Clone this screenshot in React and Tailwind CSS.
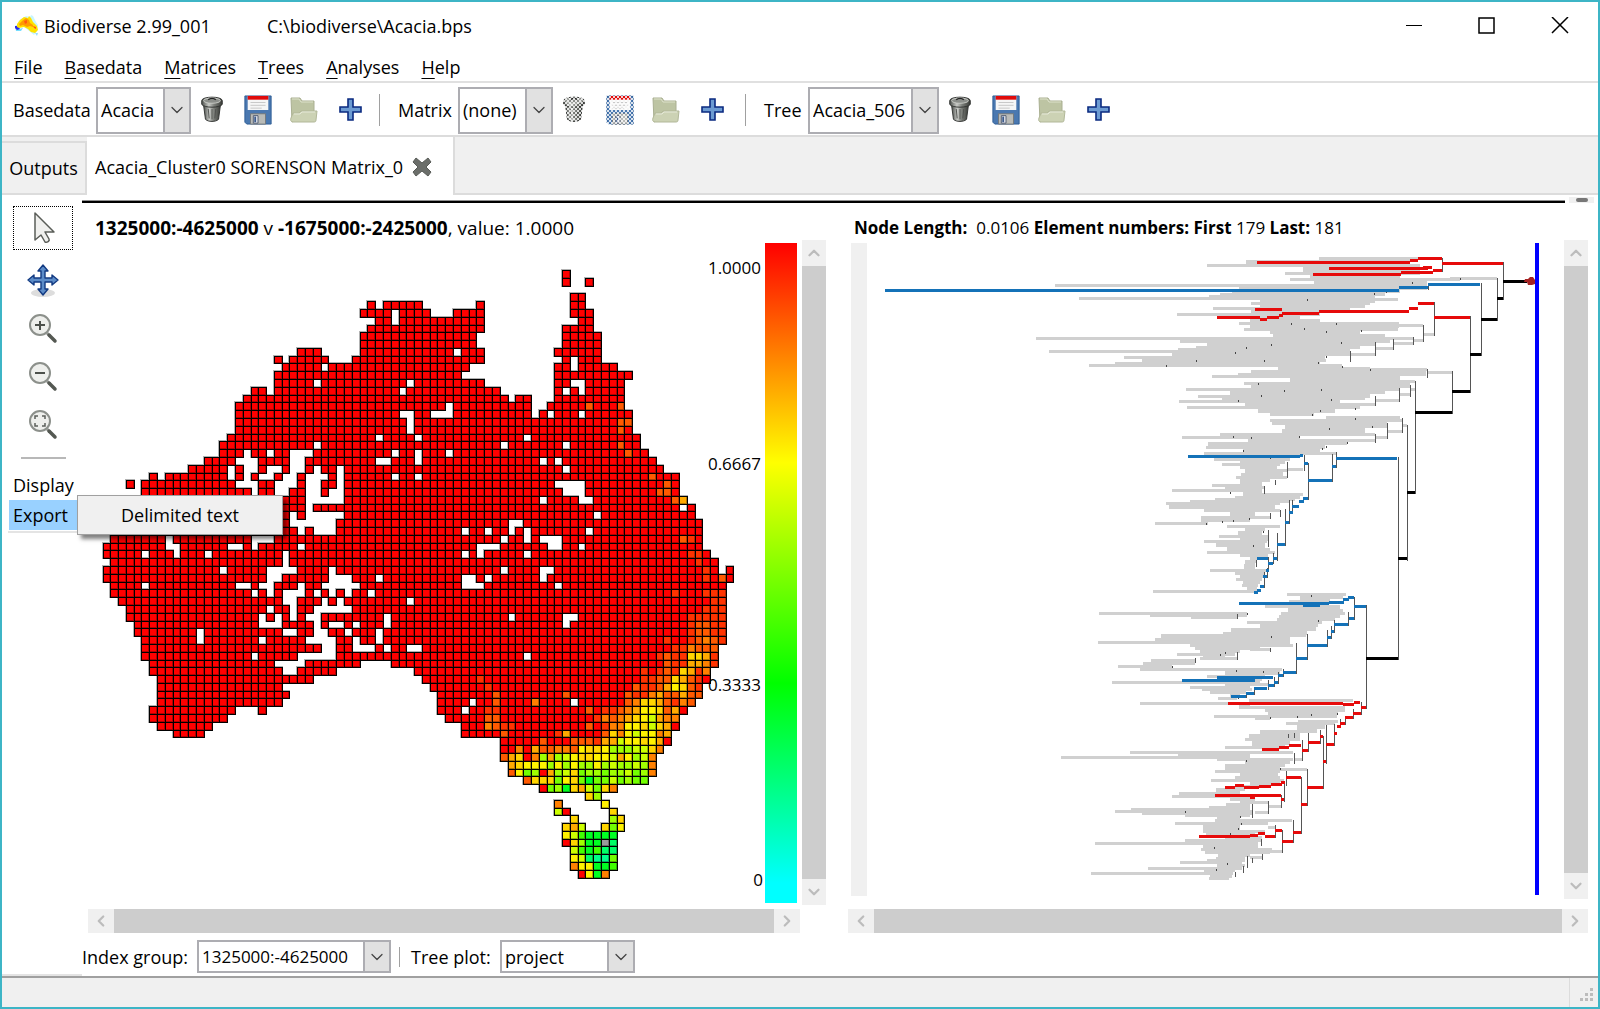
import { ChevronDown, ChevronLeft, ChevronRight, ChevronUp } from 'lucide-react';

// one entry per grid row, "start-end" column spans
const MAP_ROWS = [
  '59-60',
  '59-60 62-63',
  '',
  '60-62',
  '34-35 36-41 48-49 60-62',
  '33-37 38-42 45-49 60-63',
  '35-37 38-49 61-63',
  '34-49 59-63',
  '33-48 59-64',
  '33-48 59-64',
  '25-28 33-45 46-49 58-64',
  '22-23 24-29 32-49 59-60 61-64',
  '23-28 29-47 58-60 61-66',
  '22-46 58-68',
  '22-27 28-39 40-49 58-60 62-67',
  '19-21 22-38 39-51 58-59 60-61 62-67',
  '18-52 53-55 58-67',
  '17-44 45-55 57-67',
  '17-38 40-42 45-55 56-57 58-61 62-68',
  '17-39 40-68',
  '17-39 40-68',
  '16-35 36-40 41-54 55-69',
  '15-27 28-51 52-59 60-69',
  '15-18 19-21 22-24 27-37 38-40 41-44 45-70',
  '13-17 20-24 26-35 37-40 41-56 57-58 59-71',
  '11-16 17-18 20-21 23-24 26-27 28-30 31-59 60-72',
  '6-7 8-16 17-18 19-20 22-23 25-26 29-30 31-37 38-40 41-74',
  '3-4 5-17 20-22 25-26 28-30 31-58 62-74',
  '5-19 20-22 24-26 28-29 31-59 62-74',
  '4-26 31-56 57-61 63-75',
  '4-26 27-74 75-76',
  '3-24 25-26 31-63 64-76',
  '3-24 30-52 54-77',
  '2-25 26-27 30-46 47-49 50-52 53-54 55-62 63-77',
  '1-8 9-19 22-51 52-54 55-56 59-77',
  '0-8 10-16 18-19 20-25 26-48 51-57 59-61 62-77',
  '0-5 6-9 10-13 14-23 24-46 47-48 49-54 55-78',
  '1-23 24-79',
  '0-15 16-21 25-29 30-51 52-56 58-79 80-81',
  '0-21 23-29 32-35 36-46 48-49 50-56 57-81',
  '1-5 6-17 19-20 22-25 26-28 33-46 49-58 59-80',
  '1-19 20-21 22-23 26-27 28-29 30-31 32-34 35-80',
  '2-23 25-28 29-30 31-39 40-80',
  '3-21 22-24 25-27 32-80',
  '3-20 21-22 23-24 25-26 28-36 37-52 53-59 61-80',
  '4-20 23-27 28-29 31-32 33-36 37-59 60-80',
  '4-12 13-23 25-27 29-31 32-35 36-80',
  '5-12 13-20 21-26 30-32 33-35 36-80',
  '5-28 30-32 35-36 37-39 41-79',
  '5-19 20-25 30-54 55-79',
  '6-22 26-33 37-79',
  '6-23 25-30 40-78',
  '7-27 41-78',
  '7-23 42-77',
  '7-24 43-77',
  '7-23 43-47 48-60 61-76',
  '6-17 20-21 43-46 47-75',
  '6-16 44-74',
  '7-14 46-74',
  '9-13 46-73',
  '51-73',
  '51-72',
  '51-71',
  '52-71',
  '52-71',
  '54-70',
  '56-66',
  '62-64',
  '58-59 64-65',
  '58-60 65-66',
  '60-61 65-67',
  '59-62 64-67',
  '59-66',
  '59-66',
  '60-66',
  '60-66',
  '60-66',
  '61-65',
];

const MAP_COLORS = {
  a: '#ff0000',
  b: '#ff3300',
  c: '#ff5a00',
  d: '#ff8000',
  e: '#ffaa00',
  f: '#ffd500',
  g: '#fff200',
  h: '#ccff00',
  i: '#a0ff00',
  j: '#73ff00',
  k: '#40ff00',
  l: '#00ff22',
  m: '#00ff66',
  n: '#00ff8c',
  x: '#999999',
};

// row: [first column, colour letters]
const MAP_SHADES = {
  17: [[62, 'c'], [66, 'c']],
  19: [[66, 'cc']],
  20: [[66, 'c']],
  22: [[66, 'c']],
  23: [[67, 'c']],
  26: [[70, 'c']],
  27: [[72, 'c']],
  28: [[71, 'cc']],
  29: [[73, 'ce']],
  34: [[74, 'cb']],
  36: [[75, 'bb']],
  37: [[76, 'b']],
  38: [[77, 'b']],
  39: [[77, 'b'], [79, 'c']],
  41: [[73, 'b'], [77, 'bbb']],
  42: [[78, 'bb']],
  43: [[77, 'bbb']],
  44: [[75, 'bbbbb']],
  45: [[75, 'bccbb']],
  46: [[75, 'bccbb']],
  47: [[72, 'b'], [75, 'bcdcb']],
  48: [[73, 'bbdccc']],
  49: [[71, 'bcbbffeb']],
  50: [[72, 'cbbeedb']],
  51: [[69, 'babcbfebd']],
  52: [[48, 'b'], [69, 'bbccfecba']],
  53: [[49, 'b'], [68, 'cbbcegfcb']],
  54: [[50, 'c'], [59, 'c'], [67, 'cbbdeccecc']],
  55: [[50, 'c'], [55, 'd'], [67, 'cdffecbdc']],
  56: [[49, 'bb'], [62, 'cabbcdeggfcea']],
  57: [[49, 'cc'], [63, 'bdcdefghedd']],
  58: [[49, 'dcbb'], [62, 'c'], [64, 'bddggfhfea']],
  59: [[51, 'c'], [58, 'be'], [64, 'cfdghggde']],
  60: [[56, 'c'], [60, 'cccbeehggfgea']],
  61: [[51, 'aadaeccddcgffgiiihhfd']],
  62: [[51, 'cefadieihgffgghegihd']],
  63: [[52, 'efgggigigiigihiihid']],
  64: [[52, 'cgjiaeihfjiijiihjid']],
  65: [[54, 'cfffjgfjljjhjijj']],
  66: [[56, 'ajilfehjfd']],
  67: [[62, 'fi']],
  68: [[58, 'd'], [64, 'g']],
  69: [[58, 'ha'], [65, 'f']],
  70: [[60, 'f'], [65, 'if']],
  71: [[59, 'feh'], [64, 'fjg']],
  72: [[59, 'ghkllll']],
  73: [[59, 'afillxm']],
  74: [[60, 'hklkmm']],
  75: [[60, 'ghmnnj']],
  76: [[60, 'dggllk']],
  77: [[61, 'agld']],
};

const CELL = 7.79;

function buildMap() {
  const paths = {};
  MAP_ROWS.forEach((row, r) => {
    if (!row) return;
    const shades = {};
    (MAP_SHADES[r] || []).forEach(([start, letters]) => {
      letters.split('').forEach((l, i) => {
        shades[start + i] = l;
      });
    });
    const y = Math.round(30 + r * CELL);
    const h = Math.round(30 + (r + 1) * CELL) - y;
    row.split(' ').forEach((span) => {
      const [from, to] = span.split('-').map(Number);
      for (let c = from; c < to; c++) {
        const x = Math.round(14.5 + c * CELL);
        const w = Math.round(14.5 + (c + 1) * CELL) - x;
        const key = shades[c] || 'a';
        paths[key] = (paths[key] || '') + `M${x} ${y}h${w}v${h}h-${w}z`;
      }
    });
  });
  return paths;
}

const MAP_PATHS = buildMap();
const MAP_OUTLINE = Object.values(MAP_PATHS).join('');

// terminal branches of the dendrogram: y, x1, x2
const LEAVES = [
  [258, 1319, 1418], [261, 1246, 1410], [265, 1207, 1420], [268, 1303, 1423], [270, 1303, 1420],
  [273, 1285, 1420], [276, 1310, 1400], [279, 1290, 1460], [282, 1314, 1427], [285, 1055, 1427],
  [288, 1239, 1427], [291, 1232, 1400], [294, 1220, 1385], [296, 1209, 1375], [298, 1079, 1375],
  [301, 1260, 1375], [303, 1251, 1370], [306, 1260, 1365], [308, 1213, 1350], [311, 1251, 1350],
  [314, 1177, 1320], [317, 1239, 1300], [320, 1250, 1320], [323, 1239, 1399], [326, 1250, 1399],
  [329, 1244, 1398], [332, 1270, 1360], [335, 1273, 1385], [338, 1036, 1413], [341, 1180, 1390],
  [344, 1207, 1375], [347, 1196, 1360], [349, 1178, 1350], [351, 1049, 1350], [354, 1172, 1350],
  [357, 1124, 1325], [360, 1142, 1326], [363, 1115, 1320], [365, 1089, 1342], [368, 1278, 1370],
  [371, 1251, 1426], [374, 1238, 1426], [376, 1212, 1400], [379, 1290, 1400], [383, 1244, 1410],
  [386, 1251, 1410], [389, 1186, 1400], [392, 1230, 1385], [396, 1198, 1370], [398, 1222, 1365],
  [401, 1179, 1340], [404, 1245, 1375], [407, 1187, 1360], [411, 1258, 1335], [414, 1270, 1314],
  [417, 1326, 1400], [420, 1270, 1402], [423, 1272, 1387], [426, 1285, 1387], [430, 1282, 1365],
  [434, 1220, 1375], [437, 1182, 1300], [440, 1248, 1375], [443, 1208, 1347], [447, 1206, 1325],
  [450, 1243, 1320], [453, 1204, 1336], [456, 1214, 1300], [459, 1214, 1290], [462, 1240, 1285],
  [464, 1222, 1280], [467, 1240, 1277], [470, 1245, 1287], [474, 1241, 1283], [477, 1236, 1287],
  [480, 1240, 1270], [485, 1212, 1262], [487, 1225, 1265], [490, 1172, 1262], [494, 1243, 1303],
  [497, 1235, 1300], [499, 1215, 1295], [501, 1190, 1290], [503, 1166, 1280], [507, 1169, 1275],
  [510, 1204, 1280], [513, 1230, 1255], [517, 1201, 1270], [520, 1201, 1250], [523, 1155, 1208],
  [526, 1227, 1280], [529, 1245, 1265], [532, 1238, 1262], [536, 1219, 1268], [539, 1240, 1268],
  [541, 1204, 1267], [545, 1216, 1265], [549, 1227, 1270], [552, 1207, 1275], [555, 1240, 1268],
  [558, 1250, 1265], [561, 1245, 1256], [565, 1244, 1255], [570, 1210, 1266], [573, 1235, 1264],
  [576, 1240, 1263], [579, 1236, 1262], [582, 1243, 1260], [585, 1242, 1258], [588, 1247, 1257],
  [591, 1153, 1257], [594, 1287, 1346], [597, 1300, 1343], [601, 1289, 1330], [603, 1270, 1320],
  [606, 1265, 1340], [610, 1288, 1343], [613, 1281, 1345], [616, 1279, 1340], [619, 1277, 1335],
  [622, 1247, 1322], [625, 1260, 1318], [629, 1231, 1316], [633, 1223, 1307], [635, 1161, 1306],
  [639, 1155, 1290], [642, 1098, 1290], [645, 1190, 1293], [648, 1195, 1260], [651, 1200, 1240],
  [654, 1177, 1235], [657, 1203, 1225], [660, 1151, 1195], [663, 1143, 1195], [666, 1118, 1172],
  [669, 1140, 1282], [673, 1225, 1280], [676, 1207, 1265], [679, 1217, 1262], [682, 1112, 1260],
  [684, 1225, 1268], [687, 1190, 1250], [689, 1202, 1252], [692, 1210, 1246], [694, 1230, 1240],
  [698, 1218, 1237], [700, 1249, 1353], [703, 1140, 1250], [707, 1239, 1345], [710, 1265, 1345],
  [713, 1268, 1338], [716, 1214, 1337], [718, 1255, 1270], [721, 1298, 1338], [723, 1286, 1335],
  [727, 1297, 1325], [731, 1260, 1317], [735, 1249, 1300], [739, 1245, 1300], [743, 1252, 1290],
  [747, 1225, 1285], [749, 1270, 1275], [752, 1130, 1293], [755, 1178, 1250], [757, 1061, 1250],
  [759, 1217, 1293], [762, 1245, 1290], [765, 1225, 1285], [768, 1225, 1280], [771, 1215, 1280],
  [774, 1240, 1278], [777, 1235, 1280], [780, 1211, 1284], [783, 1250, 1280], [786, 1235, 1265],
  [789, 1216, 1245], [793, 1179, 1240], [796, 1172, 1250], [799, 1230, 1255], [802, 1240, 1262],
  [804, 1226, 1250], [807, 1209, 1250], [809, 1131, 1250], [811, 1115, 1252], [813, 1142, 1252],
  [815, 1185, 1250], [817, 1217, 1240], [820, 1215, 1292], [823, 1175, 1268], [828, 1203, 1240],
  [831, 1203, 1265], [834, 1206, 1255], [837, 1225, 1262], [840, 1185, 1262], [843, 1095, 1258],
  [847, 1203, 1258], [849, 1201, 1272], [852, 1205, 1270], [855, 1218, 1250], [858, 1216, 1245],
  [860, 1207, 1245], [862, 1180, 1242], [865, 1217, 1245], [868, 1148, 1242], [870, 1204, 1235],
  [873, 1091, 1233], [876, 1210, 1232], [878, 1209, 1229],
];

const LEAF_EXTRA = [
  [278, 1450, 1497], [299, 1340, 1398], [325, 1399, 1423], [334, 1423, 1434], [340, 1413, 1423],
  [343, 1393, 1413], [348, 1375, 1393], [354, 1350, 1375], [369, 1360, 1427], [372, 1427, 1452],
  [381, 1400, 1415], [389, 1410, 1415], [394, 1399, 1410], [400, 1375, 1399], [425, 1402, 1407],
  [431, 1387, 1402], [437, 1375, 1387], [469, 1288, 1303], [613, 1099, 1247], [615, 1150, 1247],
  [617, 1191, 1237], [649, 1250, 1270], [658, 1200, 1237], [759, 1294, 1302], [769, 1280, 1307],
  [802, 1260, 1268], [806, 1268, 1281], [812, 1255, 1268], [827, 1268, 1275], [851, 1268, 1282],
  [857, 1250, 1262],
];

const RED = [
  [258, 1418, 1442], [260, 1410, 1418], [262, 1257, 1410], [263, 1442, 1503], [267, 1423, 1432],
  [268, 1329, 1428], [270, 1433, 1442], [272, 1401, 1433], [274, 1313, 1401], [303, 1418, 1434],
  [308, 1409, 1418], [311, 1319, 1409], [313, 1282, 1319], [309, 1255, 1282], [315, 1279, 1283],
  [317, 1267, 1279], [319, 1260, 1267], [317, 1217, 1260], [317, 1434, 1470], [703, 1228, 1343],
  [704, 1343, 1354], [702, 1354, 1360], [707, 1361, 1366], [713, 1353, 1361], [717, 1345, 1353],
  [723, 1340, 1345], [726, 1337, 1341], [733, 1334, 1337], [744, 1326, 1334], [761, 1323, 1326],
  [736, 1320, 1323], [787, 1307, 1323], [742, 1308, 1320], [750, 1302, 1308], [745, 1289, 1301],
  [747, 1279, 1289], [749, 1262, 1279], [804, 1301, 1307], [777, 1286, 1301], [832, 1293, 1301],
  [841, 1282, 1293], [830, 1275, 1282], [836, 1265, 1275], [833, 1258, 1265], [835, 1250, 1258],
  [836, 1199, 1250], [782, 1281, 1285], [784, 1271, 1282], [786, 1259, 1271], [787, 1244, 1259],
  [785, 1235, 1244], [787, 1225, 1235], [799, 1281, 1284], [795, 1215, 1281], [797, 1250, 1255],
];

const BLUE = [
  [290, 885, 1399], [287, 1399, 1428], [284, 1428, 1480], [456, 1188, 1300], [455, 1300, 1303],
  [463, 1304, 1308], [480, 1308, 1332], [466, 1332, 1336], [458, 1336, 1397], [498, 1303, 1308],
  [501, 1299, 1304], [506, 1292, 1299], [512, 1289, 1293], [522, 1285, 1289], [544, 1277, 1285],
  [558, 1273, 1277], [563, 1268, 1273], [558, 1257, 1268], [570, 1266, 1269], [576, 1263, 1267],
  [586, 1260, 1264], [590, 1257, 1261], [592, 1254, 1258], [597, 1348, 1354], [599, 1343, 1349],
  [602, 1329, 1344], [603, 1239, 1329], [605, 1303, 1320], [606, 1354, 1366], [618, 1349, 1354],
  [624, 1334, 1348], [631, 1331, 1334], [637, 1327, 1331], [645, 1307, 1327], [658, 1296, 1307],
  [672, 1283, 1296], [675, 1278, 1283], [682, 1274, 1278], [685, 1268, 1274], [688, 1254, 1267],
  [693, 1246, 1254], [696, 1231, 1246], [677, 1262, 1273], [677, 1217, 1262], [680, 1182, 1255],
];

const BLACK = [
  [281, 1503, 1527], [298, 1497, 1503], [319, 1481, 1497], [354, 1470, 1481], [391, 1452, 1470],
  [412, 1415, 1452], [492, 1407, 1415], [558, 1398, 1407], [658, 1366, 1398],
];

// x, y1, y2
const STEMS = [
  [1442, 258, 271], [1503, 262, 299], [1497, 278, 320], [1481, 283, 355], [1428, 283, 289],
  [1470, 316, 392], [1434, 302, 335], [1452, 371, 413], [1427, 369, 377], [1415, 381, 493],
  [1407, 425, 560], [1398, 457, 659], [1366, 605, 708], [1423, 325, 341], [1413, 337, 344],
  [1393, 339, 349], [1375, 342, 355], [1350, 351, 361], [1399, 388, 401], [1410, 385, 396],
  [1375, 396, 405], [1402, 418, 432], [1387, 423, 438], [1375, 434, 442], [1304, 455, 470],
  [1308, 463, 499], [1332, 454, 481], [1336, 452, 467], [1287, 462, 477], [1275, 480, 484],
  [1264, 486, 493], [1289, 500, 523], [1292, 500, 513], [1285, 509, 545], [1280, 510, 516],
  [1270, 513, 518], [1277, 533, 560], [1273, 553, 563], [1268, 530, 546], [1268, 557, 571],
  [1267, 568, 577], [1264, 572, 587], [1256, 560, 566], [1354, 597, 619], [1348, 612, 625],
  [1334, 620, 632], [1331, 626, 638], [1327, 630, 646], [1307, 634, 659], [1296, 643, 673],
  [1283, 669, 676], [1278, 672, 683], [1274, 677, 686], [1268, 680, 689], [1254, 687, 694],
  [1246, 692, 697], [1237, 614, 618], [1270, 648, 651], [1237, 652, 659], [1195, 658, 662],
  [1361, 702, 714], [1353, 709, 718], [1345, 717, 724], [1340, 719, 727], [1334, 724, 745],
  [1326, 725, 763], [1323, 736, 788], [1320, 730, 743], [1308, 733, 751], [1302, 740, 760],
  [1294, 753, 763], [1307, 769, 805], [1301, 777, 833], [1286, 771, 785], [1284, 782, 801],
  [1281, 795, 807], [1268, 801, 813], [1252, 804, 817], [1293, 820, 842], [1282, 830, 852],
  [1275, 825, 837], [1262, 854, 859], [1252, 858, 862], [1247, 856, 867], [1243, 866, 872],
  [1235, 872, 876], [1261, 839, 845], [1288, 734, 737], [1294, 733, 737],
];

const TICKS = [
  [1460, 279], [1412, 283], [1374, 294], [1307, 300], [1386, 292], [1291, 324], [1336, 324], [1304, 329],
  [1361, 331], [1326, 332], [1341, 343], [1271, 345], [1246, 348], [1235, 353], [1166, 366], [1196, 361],
  [1264, 361], [1318, 363], [1326, 357], [1342, 367], [1370, 370], [1258, 384], [1284, 391], [1321, 390],
  [1261, 396], [1238, 401], [1331, 400], [1355, 409], [1312, 415], [1320, 411], [1355, 419], [1372, 427],
  [1329, 429], [1299, 437], [1251, 438], [1233, 437], [1347, 443], [1326, 447], [1322, 449], [1243, 451],
  [1270, 458], [1230, 493], [1222, 522], [1233, 521], [1249, 519], [1206, 524], [1263, 532], [1253, 546],
  [1311, 596], [1247, 614], [1318, 621], [1271, 637], [1225, 653], [1220, 655], [1172, 667], [1236, 671],
  [1263, 672], [1238, 698], [1270, 718], [1297, 717], [1311, 715], [1337, 714], [1246, 761], [1280, 769],
  [1185, 812], [1240, 817], [1241, 824], [1238, 829], [1230, 834], [1214, 848], [1216, 870], [1227, 864],
];

const hPath = (rows) => rows.map(([y, x1, x2]) => `M${x1} ${y}h${x2 - x1}v3h${x1 - x2}z`).join('');

const leafFill = LEAVES.slice(1)
  .map(([y, x1, x2], i) => {
    const [py, px1, px2] = LEAVES[i];
    const left = Math.max(x1, px1);
    const right = Math.min(x2, px2);
    return right > left && y - py < 6 ? `M${left} ${py}H${right}V${y + 3}H${left}z` : '';
  })
  .join('');

function MapCanvas() {
  return (
    <svg className="h-full w-full" role="img" aria-label="Map of groups">
      <defs>
        <linearGradient id="legend" x1="0" y1="0" x2="0" y2="1">
          <stop offset="0" stopColor="#ff0000" />
          <stop offset="0.333" stopColor="#ffff00" />
          <stop offset="0.667" stopColor="#00ff00" />
          <stop offset="0.97" stopColor="#00ffff" />
          <stop offset="1" stopColor="#00ffff" />
        </linearGradient>
      </defs>
      <g shapeRendering="crispEdges">
        {Object.entries(MAP_PATHS).map(([key, d]) => (
          <path key={key} d={d} fill={MAP_COLORS[key]} />
        ))}
        <path d={MAP_OUTLINE} fill="none" stroke="#000" strokeWidth="2" strokeOpacity="0.3" />
        <path d={MAP_OUTLINE} fill="none" stroke="#000" strokeWidth="1" />
      </g>
      <rect x="677" y="3" width="32" height="660" fill="url(#legend)" />
      <g textAnchor="end" fill="#000" className="text-[17px]">
        <text x="673" y="34">1.0000</text>
        <text x="673" y="230">0.6667</text>
        <text x="673" y="451">0.3333</text>
        <text x="675" y="646">0</text>
      </g>
    </svg>
  );
}

function TreeCanvas() {
  return (
    <svg className="h-full w-full" role="img" aria-label="Cluster dendrogram">
      <rect x="3" y="3" width="16" height="653" fill="#f0f0f0" />
      <g transform="translate(-848 -241)" shapeRendering="crispEdges">
        <path d={leafFill + hPath(LEAVES) + hPath(LEAF_EXTRA)} fill="#d0d0d0" />
        <path
          d={STEMS.map(([x, y1, y2]) => `M${x} ${y1}V${y2 + 1}`).join('')}
          stroke="#555"
          strokeWidth="1"
          transform="translate(0.5 1)"
        />
        <path d={TICKS.map(([x, y]) => `M${x} ${y}h1v2h-1z`).join('')} fill="#444" />
        <path d={hPath(BLACK)} fill="#000" />
        <path d={hPath(BLUE)} fill="#1472b8" />
        <path d={hPath(RED)} fill="#e60b0b" />
        <path d="M1535 244h4v652h-4z" fill="#0000ff" />
      </g>
      <path d="M677 39h3l2-2h3l2 3v4l-3 1h-4l-1-3h-3z" fill="#a52222" />
    </svg>
  );
}

function LogoIcon() {
  return (
    <svg width="24" height="22" viewBox="0 0 24 22" aria-hidden="true">
      <path d="M3 7l3-3 5-3 4 1 1-2 2 1 3 6 2 3-1 6-3 4z" fill="#c8f6ff" />
      <path d="M0 11l3-1 1 4 4-1-2 3H1z" fill="#7df" />
      <path d="M0 11h3l2 3-3 1-2-2z" fill="#2a2ae8" />
      <path d="M2 9l3-4 4-3 4 1 1-2 2 2 2 4 4 4 1 4-3 3-4-1-3-3-4-2-5 1-2-1z" fill="#ffe100" />
      <path d="M7 6l4-3 3 2 1 3 3 2v2l-3-1-3 1-4-2-3 1-1-2z" fill="#ff9a00" />
      <path d="M9 6l3-1v3l-2 1zM18 11l3 1v2l-2-1z" fill="#ff5a10" />
      <path d="M20 18h3l-1 3z" fill="#9df" />
    </svg>
  );
}

function TrashIcon() {
  return (
    <svg width="24" height="28" viewBox="0 0 24 30" aria-hidden="true">
      <defs>
        <linearGradient id="can">
          <stop offset="0" stopColor="#4a4d4a" />
          <stop offset="0.35" stopColor="#c8cac6" />
          <stop offset="0.6" stopColor="#7c7f7a" />
          <stop offset="1" stopColor="#3a3c38" />
        </linearGradient>
      </defs>
      <path d="M3 10h18l-2 15c-3 3-11 3-14 0z" fill="url(#can)" stroke="#2e302e" />
      <path d="M8 14l1 10M12 14v11M16 14l-1 10" stroke="#50524f" />
      <path d="M1 5c0-5 22-5 22 0v4c-3 4-19 4-22 0z" fill="url(#can)" stroke="#2e302e" />
      <ellipse cx="12" cy="5" rx="9" ry="2.8" fill="#8b8e8a" stroke="#c9cbc6" />
      <path d="M8 4c2-2 6-2 8 0" stroke="#222" fill="none" strokeWidth="1.4" />
    </svg>
  );
}

function SaveIcon() {
  return (
    <svg width="30" height="30" viewBox="0 0 30 32" aria-hidden="true">
      <path d="M1 1h28v30H3l-2-2z" fill="#4a78b0" stroke="#2d5c94" />
      <path d="M4 1h22v15H4z" fill="#f6f6f6" />
      <path d="M4 1h22v4H4z" fill="#e00b0b" />
      <path d="M7 8h16M7 11h16M7 14h12" stroke="#c5c5c5" />
      <path d="M7 20h16v11H7z" fill="#b9bbb8" stroke="#74777a" />
      <path d="M10 22h5v8h-5z" fill="#e9eaf0" stroke="#4d5a70" />
      <path d="M11 23h2v6h-2z" fill="#3c5b8c" />
    </svg>
  );
}

function FolderIcon() {
  return (
    <svg width="30" height="28" viewBox="0 0 30 28" aria-hidden="true">
      <path d="M2 2h9l2 3h12v12l-22 9z" fill="#bdc4a3" stroke="#aab092" strokeLinejoin="round" />
      <path d="M3 3h7l2 3h12" stroke="#dde1cb" fill="none" />
      <path d="M4 26c-2 0-3-2-2-4l2-5h6l2-2h16l-1 9c0 2-1 2-3 2z" fill="#ccd2b4" stroke="#b2b899" strokeLinejoin="round" />
      <path d="M5 18h6l2-2h13" stroke="#e5e8d8" fill="none" />
    </svg>
  );
}

function PlusIcon() {
  return (
    <svg width="24" height="24" viewBox="0 0 24 24" aria-hidden="true">
      <path d="M10 1h5v8h8v5h-8v8h-5v-8H2V9h8z" fill="#6c9bd2" stroke="#0a2a80" strokeWidth="1.6" />
    </svg>
  );
}

function IconButton({ label, disabled, children }) {
  return (
    <button
      type="button"
      aria-label={label}
      disabled={disabled}
      className="relative flex h-10 w-[42px] items-center justify-center"
    >
      {children}
      {disabled && (
        <svg className="absolute inset-0 h-full w-full" aria-hidden="true">
          <defs>
            <pattern id="stipple" width="4" height="4" patternUnits="userSpaceOnUse">
              <path d="M0 0h2v2H0zM2 2h2v2H2z" fill="#fff" fillOpacity="0.8" />
            </pattern>
          </defs>
          <rect width="100%" height="100%" fill="url(#stipple)" shapeRendering="crispEdges" />
        </svg>
      )}
    </button>
  );
}

function Combo({ id, value, size }) {
  return (
    <div className={`relative shrink-0 ${size}`}>
      <select
        id={id}
        defaultValue={value}
        className="h-full w-full appearance-none border-2 border-[#adadb2] bg-white pl-[3px] pr-7 outline-none"
      >
        <option>{value}</option>
      </select>
      <span className="pointer-events-none absolute inset-y-0 right-0 flex w-7 items-center justify-center border-2 border-[#adadb2] bg-[#e1e1e1]">
        <ChevronDown className="size-5 text-[#444]" strokeWidth={1.5} />
      </span>
    </div>
  );
}

function ToolGroup({ name, label, value, labelWidth, size, disabled }) {
  return (
    <div className="flex items-center">
      <label htmlFor={name} className={labelWidth}>
        {label}
      </label>
      <Combo id={name} value={value} size={size} />
      <div className="flex gap-1">
        <IconButton label={`Delete ${label}`} disabled={disabled}>
          <TrashIcon />
        </IconButton>
        <IconButton label={`Save ${label}`} disabled={disabled}>
          <SaveIcon />
        </IconButton>
        <IconButton label={`Open ${label}`}>
          <FolderIcon />
        </IconButton>
        <IconButton label={`New ${label}`}>
          <PlusIcon />
        </IconButton>
      </div>
    </div>
  );
}

function ScrollBar({ vertical }) {
  const Back = vertical ? ChevronUp : ChevronLeft;
  const Forward = vertical ? ChevronDown : ChevronRight;
  const button = vertical ? 'h-[26px] w-full' : 'h-full w-[26px]';
  return (
    <div className={vertical ? 'flex w-6 shrink-0 flex-col bg-[#f0f0f0]' : 'flex h-6 bg-[#f0f0f0]'}>
      <button type="button" aria-label="Scroll back" className={`flex shrink-0 items-center justify-center ${button}`}>
        <Back className="size-[18px] text-[#bcbcbc]" strokeWidth={3} />
      </button>
      <div className="flex-1 bg-[#cdcdcd]" />
      <button type="button" aria-label="Scroll forward" className={`flex shrink-0 items-center justify-center ${button}`}>
        <Forward className="size-[18px] text-[#bcbcbc]" strokeWidth={3} />
      </button>
    </div>
  );
}

function Magnifier({ children }) {
  return (
    <svg width="32" height="32" viewBox="0 0 32 32" fill="none" aria-hidden="true">
      <path d="M20 20l3 3" stroke="#a0a29e" strokeWidth="3" />
      <path d="M22 22l6 6" stroke="#545852" strokeWidth="3.5" strokeLinecap="round" />
      <circle cx="13" cy="12" r="10" fill="#eeefec" stroke="#8c908b" strokeWidth="2" />
      {children}
    </svg>
  );
}

function SideTools() {
  return (
    <aside className="flex w-20 shrink-0 flex-col border-b-2 border-[#e4e4e4]">
      <div className="flex flex-col items-center pl-[2px] pt-[11px]">
        <button
          type="button"
          aria-label="Select"
          className="flex h-[44px] w-[60px] items-center justify-center border border-dotted border-black"
        >
          <svg width="24" height="34" viewBox="0 0 24 34" aria-hidden="true">
            <path
              d="M4 2v27l6-5 4 7c2 1 5-1 4-3l-4-7h9z"
              fill="#f0f0ee"
              stroke="#5a5d58"
              strokeWidth="1.5"
              strokeLinejoin="round"
            />
          </svg>
        </button>
        <button type="button" aria-label="Pan" className="mt-[11px] flex h-10 w-12 items-center justify-center">
          <svg width="32" height="34" viewBox="0 0 32 34" aria-hidden="true">
            <ellipse cx="16" cy="29" rx="12" ry="4" fill="#ddd" />
            <path
              d="M16 1l5 6h-3v7h7v-3l6 5-6 5v-3h-7v7h3l-5 6-5-6h3v-7H7v3l-6-5 6-5v3h7V7h-3z"
              fill="#5c8cc8"
              stroke="#123a82"
              strokeWidth="1.4"
              strokeLinejoin="round"
            />
          </svg>
        </button>
        <button type="button" aria-label="Zoom in" className="mt-2 flex h-10 w-12 items-center justify-center">
          <Magnifier>
            <path d="M13 8v9M8 12h10" stroke="#4c504b" strokeWidth="2" />
          </Magnifier>
        </button>
        <button type="button" aria-label="Zoom out" className="mt-2 flex h-10 w-12 items-center justify-center">
          <Magnifier>
            <path d="M8 12h10" stroke="#4c504b" strokeWidth="2" />
          </Magnifier>
        </button>
        <button type="button" aria-label="Zoom to fit" className="mt-2 flex h-10 w-12 items-center justify-center">
          <Magnifier>
            <path d="M8 10V7h3M15 7h3v3M18 14v3h-3M11 17H8v-3" stroke="#5c605b" strokeWidth="1.5" />
          </Magnifier>
        </button>
        <hr className="mt-3 w-[45px] border-t-2 border-[#b8b8b8]" />
      </div>
      <div className="mt-[11px] flex flex-col pl-[7px]">
        <button type="button" className="h-[30px] pl-1 text-left">
          Display
        </button>
        <div className="relative">
          <button type="button" aria-haspopup="menu" className="block h-[30px] w-full bg-[#99d1ff] pl-1 text-left">
            Export
          </button>
          <div
            role="menu"
            className="absolute -top-[5px] left-[68px] z-10 w-[206px] border border-[#a0a0a0] bg-[#f0f0f0] shadow-[4px_4px_4px_rgba(0,0,0,0.5)]"
          >
            <button type="button" role="menuitem" className="block h-[38px] w-full pl-[43px] text-left">
              Delimited text
            </button>
          </div>
        </div>
      </div>
      <hr className="ml-[6px] mt-px border-t-2 border-[#e4e4e4]" />
    </aside>
  );
}

const MENUS = ['File', 'Basedata', 'Matrices', 'Trees', 'Analyses', 'Help'];

export default function App() {
  return (
    <div className="flex h-screen min-h-[700px] flex-col border-2 border-[#3db5c6] bg-white font-['Open_Sans','Noto_Sans',sans-serif] text-[18px] leading-6 text-black">
      <header className="flex h-12 shrink-0 items-center pl-[13px]">
        <LogoIcon />
        <h1 className="ml-[5px] w-[223px]">Biodiverse 2.99_001</h1>
        <span>C:\biodiverse\Acacia.bps</span>
        <div className="ml-auto flex">
          <button type="button" aria-label="Minimize" className="flex h-10 w-[72px] items-center justify-center">
            <svg width="18" height="18" viewBox="0 0 18 18" stroke="#000" fill="none">
              <path d="M1 8.500h16" />
            </svg>
          </button>
          <button type="button" aria-label="Maximize" className="flex h-10 w-[72px] items-center justify-center">
            <svg width="18" height="18" viewBox="0 0 18 18" stroke="#000" strokeWidth="1.500" fill="none">
              <path d="M2 1h15v15H2z" />
            </svg>
          </button>
          <button type="button" aria-label="Close" className="flex h-10 w-[76px] items-center justify-center">
            <svg width="18" height="18" viewBox="0 0 18 18" stroke="#000" strokeWidth="1.500" fill="none">
              <path d="M1 0l16 16M17 0L1 16" />
            </svg>
          </button>
        </div>
      </header>

      <nav className="flex h-[33px] shrink-0 items-center gap-[22px] border-b-2 border-[#e0e0e0] pl-3 pt-[2px]">
        {MENUS.map((name) => (
          <button key={name} type="button">
            <span className="underline underline-offset-4">{name[0]}</span>
            {name.slice(1)}
          </button>
        ))}
      </nav>

      <div className="flex h-[54px] shrink-0 items-center border-b-2 border-[#dcdcdc] pl-[11px] pt-[2px]">
        <ToolGroup name="basedata" label="Basedata" value="Acacia" labelWidth="w-[83px]" size="h-[47px] w-[95px]" />
        <div className="ml-2 mr-[18px] h-8 w-px bg-[#a0a0a0]" />
        <ToolGroup name="matrix" label="Matrix" value="(none)" labelWidth="w-[60px]" size="h-[47px] w-[95px]" disabled />
        <div className="ml-3 mr-[18px] h-8 w-px bg-[#a0a0a0]" />
        <ToolGroup name="tree" label="Tree" value="Acacia_506" labelWidth="w-[44px]" size="h-[47px] w-[131px]" />
      </div>

      <div role="tablist" className="flex h-[58px] shrink-0 bg-[#f0f0f0]">
        <button
          type="button"
          role="tab"
          aria-selected="false"
          className="mt-1 w-[85px] border-b-2 border-r-2 border-t-2 border-[#dcdcdc] text-center"
        >
          Outputs
        </button>
        <div className="flex w-[368px] items-center gap-2 border-r-2 border-[#dcdcdc] bg-white pl-2 pt-[2px]">
          <button type="button" role="tab" aria-selected="true">
            Acacia_Cluster0 SORENSON Matrix_0
          </button>
          <button type="button" aria-label="Close tab">
            <svg width="22" height="22" viewBox="0 0 22 22" aria-hidden="true">
              <path
                d="M5 2l6 5 6-5 3 4-5 5 5 5-3 4-6-5-6 5-3-4 5-5-5-5z"
                fill="#6b6e6a"
                stroke="#585b57"
                strokeLinejoin="round"
              />
            </svg>
          </button>
        </div>
        <div className="flex-1 border-b-2 border-[#dcdcdc]" />
      </div>

      <main className="flex min-h-0 flex-1">
        <SideTools />
        <div className="flex min-w-0 flex-1 flex-col">
          <div className="flex h-2 items-end">
            <div className="h-[3px] flex-1 border-b-2 border-t border-b-black border-t-[#909090]" />
            <div className="ml-1 mr-1 flex h-[6px] w-[25px] items-center justify-center bg-[#f0f0f0]">
              <div className="h-1 w-3 rounded-full bg-[#777]" />
            </div>
          </div>
          <div className="flex min-h-0 flex-1">
            <section className="flex min-w-0 flex-1 basis-1/2 flex-col pl-[6px] pr-[14px]">
              <p className="h-[37px] shrink-0 pl-[7px] pt-[13px] text-[19px]">
                <b>1325000:-4625000</b> v <b>-1675000:-2425000</b>, value: 1.0000
              </p>
              <div className="flex min-h-0 flex-1">
                <div className="min-w-0 flex-1">
                  <MapCanvas />
                </div>
                <ScrollBar vertical />
              </div>
              <div className="mr-[26px] mt-1">
                <ScrollBar />
              </div>
            </section>
            <section className="flex min-w-0 flex-1 basis-1/2 flex-col pl-2 pr-[10px]">
              <p className="h-[37px] shrink-0 pl-[6px] pt-[13px] text-[17px]">
                <b>Node Length:</b>&nbsp; 0.0106 <b>Element numbers: First</b> 179 <b>Last:</b> 181
              </p>
              <div className="flex min-h-0 flex-1">
                <div className="min-w-0 flex-1">
                  <TreeCanvas />
                </div>
                <div className="flex pb-[6px]">
                  <ScrollBar vertical />
                </div>
              </div>
              <div className="mt-1">
                <ScrollBar />
              </div>
            </section>
          </div>
          <div className="flex h-[43px] shrink-0 items-center pt-1">
            <label htmlFor="index-group" className="w-[115px]">
              Index group:
            </label>
            <Combo id="index-group" value="1325000:-4625000" size="h-[33px] w-[194px] text-[17px]" />
            <div className="ml-2 mr-[11px] h-5 w-px bg-[#a0a0a0]" />
            <label htmlFor="tree-plot" className="w-[89px]">
              Tree plot:
            </label>
            <Combo id="tree-plot" value="project" size="h-[33px] w-[135px]" />
          </div>
        </div>
      </main>

      <footer className="flex h-[31px] shrink-0 items-end justify-end border-t-2 border-[#a0a0a0] bg-[#f0f0f0]">
        <div className="flex h-full items-end border-l border-[#dcdcdc] pb-1 pl-2 pr-1">
          <svg width="16" height="16" viewBox="0 0 16 16" fill="#bcbcbc" aria-hidden="true">
            <path d="M12 1h3v3h-3zM7 6h3v3H7zM12 6h3v3h-3zM2 11h3v3H2zM7 11h3v3H7zM12 11h3v3h-3z" />
          </svg>
        </div>
      </footer>
    </div>
  );
}
